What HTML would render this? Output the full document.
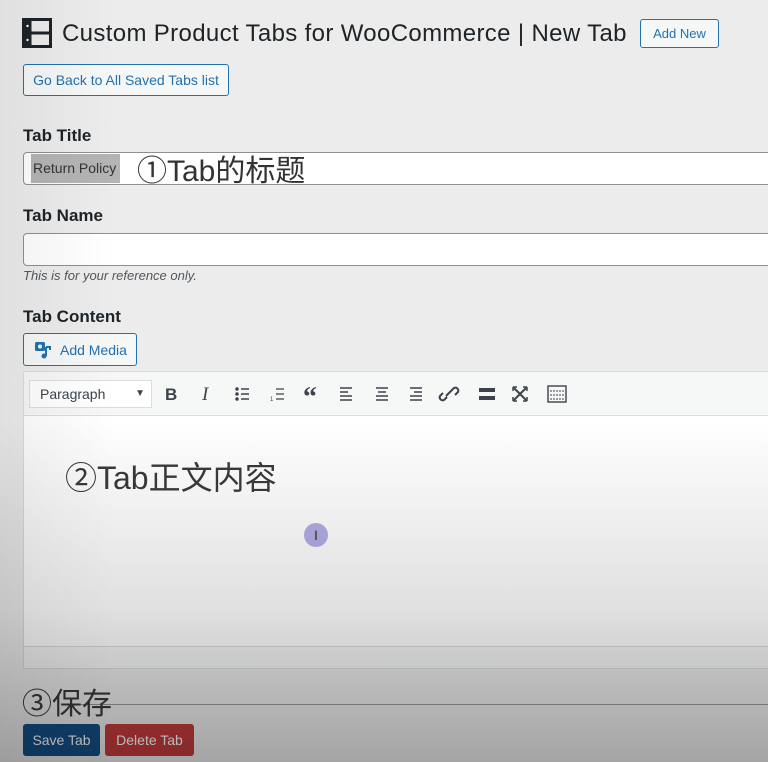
<!DOCTYPE html>
<html><head><meta charset="utf-8"><style>
*{box-sizing:border-box;margin:0;padding:0}
body{width:768px;height:762px;overflow:hidden;background:#ececec;font-family:"Liberation Sans","Noto Sans CJK SC",sans-serif;color:#1d2327;position:relative}
.abs{position:absolute}
.btn{position:absolute;border:1px solid #2271b1;border-radius:3px;background:#f6f7f7;color:#2271b1;font-size:14px;display:flex;align-items:center;justify-content:center}
.lbl{position:absolute;left:23px;font-size:17px;font-weight:bold;color:#1d2327}
.inp{position:absolute;left:23px;width:760px;height:33px;background:#fff;border:1px solid #8c8f94;border-radius:4px}
.cn{font-family:"Liberation Sans","Noto Sans CJK SC",sans-serif;color:#333}
</style></head><body>
<svg class="abs" style="left:22px;top:18px" width="30" height="30" viewBox="0 0 30 30"><rect x="1.5" y="1.5" width="27" height="27" fill="none" stroke="#1d2327" stroke-width="3"/><rect x="1.5" y="1.5" width="8" height="27" fill="#1d2327"/><rect x="1" y="13.5" width="28" height="3" fill="#1d2327"/><circle cx="5.5" cy="8" r="1.2" fill="#fff"/><circle cx="5.5" cy="22" r="1.2" fill="#fff"/></svg>
<div class="abs" style="left:62px;top:20px;font-size:24px;color:#1d2327;white-space:nowrap;letter-spacing:0.35px">Custom Product Tabs for WooCommerce | New Tab</div>
<div class="btn" style="left:640px;top:19px;width:79px;height:29px;font-size:13px">Add New</div>
<div class="btn" style="left:23px;top:64px;width:206px;height:32px">Go Back to All Saved Tabs list</div>
<div class="lbl" style="top:126px">Tab Title</div>
<div class="inp" style="top:152px"></div>
<div class="abs" style="left:31px;top:154px;width:89px;height:29px;background:#b4b4b4;font-size:14px;line-height:29px;padding-left:2px;color:#333">Return Policy</div>
<div class="abs cn" style="left:137px;top:146px;font-size:30px">①Tab的标题</div>
<div class="lbl" style="top:206px">Tab Name</div>
<div class="inp" style="top:233px"></div>
<div class="abs" style="left:23px;top:268px;font-size:13px;font-style:italic;color:#50575e">This is for your reference only.</div>
<div class="lbl" style="top:307px">Tab Content</div>
<div class="btn" style="left:23px;top:333px;width:114px;height:33px;justify-content:flex-start;padding-left:10px">
<svg width="18" height="18" viewBox="0 0 18 18" style="margin-right:8px"><rect x="1" y="1" width="10" height="9" rx="1.5" fill="#2271b1"/><circle cx="6" cy="5.5" r="2" fill="#f6f7f7"/><path d="M12 6v9M12 6h4v3" stroke="#2271b1" stroke-width="2" fill="none"/><circle cx="10" cy="15" r="2.5" fill="#2271b1"/></svg>Add Media</div>
<div class="abs" style="left:23px;top:371px;width:760px;height:298px;border:1px solid #dcdcde;background:#f6f7f7"></div>
<div class="abs" style="left:24px;top:415px;width:760px;height:1px;background:#dcdcde"></div>
<div class="abs" style="left:24px;top:416px;width:760px;height:230px;background:#fff"></div>
<div class="abs" style="left:24px;top:646px;width:760px;height:1px;background:#dcdcde"></div>
<div class="abs" style="left:29px;top:380px;width:123px;height:28px;background:#fff;border:1px solid #ddd;font-size:14px;line-height:26px;padding-left:10px;color:#3c434a">Paragraph<span style="position:absolute;right:6px;font-size:10px">▼</span></div>
<svg class="abs" style="left:160px;top:382px" width="420" height="24" viewBox="0 0 420 24" fill="#3c434a" stroke="#3c434a">
<text x="5" y="18" font-family="Liberation Sans" font-weight="bold" font-size="17" stroke="none">B</text>
<text x="42" y="18" font-family="Liberation Serif" font-style="italic" font-size="19" stroke="none">I</text>
<g stroke-width="1.5"><circle cx="77" cy="7" r="1" /><circle cx="77" cy="12" r="1"/><circle cx="77" cy="17" r="1"/><path d="M81 7h8M81 12h8M81 17h8"/></g>
<g stroke-width="1.2"><path d="M116 7h8M116 12h8M116 17h8"/></g><text x="110" y="19" font-size="6" stroke="none">1</text>
<text x="143" y="24" font-family="Liberation Serif" font-weight="bold" font-size="28" stroke="none">“</text>
<g stroke-width="1.6"><path d="M180 6h12M180 10h8M180 14h12M180 18h12"/><path d="M216 6h12M218 10h8M216 14h12M216 18h12"/><path d="M250 6h12M254 10h8M250 14h12M250 18h12"/></g>
<path d="M287 15l-3 3a3 3 0 0 1-4-4l3-3M291 9l3-3a3 3 0 0 1 4 4l-3 3M286 14l6-6" fill="none" stroke-width="2"/>
<rect x="319" y="6" width="16" height="4" stroke="none"/><rect x="319" y="14" width="16" height="4" stroke="none"/>
<path d="M354 6l12 12M366 6l-12 12" stroke-width="2"/><path d="M353 5h4M353 5v4M367 5h-4M367 5v4M353 19h4M353 19v-4M367 19h-4M367 19v-4" stroke-width="1.5"/>
<rect x="388" y="4" width="18" height="16" fill="none" stroke-width="1.4"/><path d="M390 9h14M390 13h14M390 17h14" stroke-width="1" stroke-dasharray="2 1"/>
</svg>
<div class="abs cn" style="left:65px;top:453px;font-size:32px;color:#3a3a3a">②Tab正文内容</div>
<div class="abs" style="left:304px;top:523px;width:24px;height:24px;border-radius:50%;background:#b3aee6;text-align:center;font-size:14px;line-height:24px;color:#333">I</div>
<div class="abs" style="left:80px;top:704px;width:700px;height:1px;background:#999"></div>
<div class="abs cn" style="left:22px;top:679px;font-size:30px;color:#3a3a3a">③保存</div>
<div class="abs" style="left:23px;top:724px;width:77px;height:32px;background:#134f86;border-radius:3px;color:#fff;font-size:14px;display:flex;align-items:center;justify-content:center">Save Tab</div>
<div class="abs" style="left:105px;top:724px;width:89px;height:32px;background:#c23a3a;border-radius:3px;color:#fff;font-size:14px;display:flex;align-items:center;justify-content:center">Delete Tab</div>
<div class="abs" style="left:0;top:0;width:768px;height:762px;pointer-events:none;background:linear-gradient(to bottom,rgba(0,0,0,0) 0%,rgba(0,0,0,0) 55%,rgba(0,0,0,0.12) 80%,rgba(0,0,0,0.3) 100%)"></div>
<div class="abs" style="left:0;top:0;width:768px;height:762px;pointer-events:none;background:linear-gradient(to right,rgba(0,0,0,0.05),rgba(0,0,0,0) 15%)"></div>
</body></html>
